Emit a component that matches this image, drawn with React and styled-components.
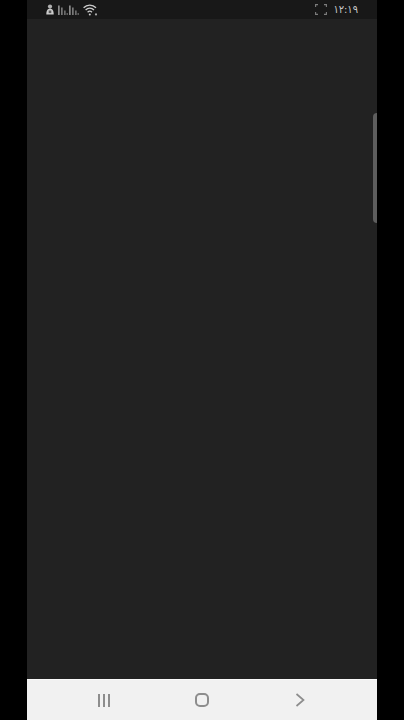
import styled, { createGlobalStyle } from "styled-components";

const GlobalStyle = createGlobalStyle`
  html, body {
    margin: 0;
    padding: 0;
    background: #000;
  }
`;

function SilentIcon() {
  return (
    <svg width="8" height="11" viewBox="0 0 8 11">
      <circle cx="4" cy="2.6" r="2.1" fill="#b0b0b0" />
      <path d="M0.3 10.6 C0.3 6 1.8 4.8 4 4.8 C6.2 4.8 7.7 6 7.7 10.6 Z" fill="#cccccc" />
      <rect x="2.7" y="6.5" width="2.6" height="2.6" fill="#5a5a5a" />
    </svg>
  );
}

function SignalIcon() {
  return (
    <svg width="10" height="10" viewBox="0 0 10 10">
      <rect x="0" y="0.5" width="1.7" height="9.5" fill="#8c8c8c" />
      <rect x="3" y="2.5" width="1.7" height="7.5" fill="#787878" />
      <rect x="6" y="5.5" width="1.7" height="4.5" fill="#6c6c6c" />
      <rect x="8.5" y="8" width="1.5" height="2" fill="#5c5c5c" />
    </svg>
  );
}

function WifiIcon() {
  return (
    <svg width="15" height="12" viewBox="0 0 15 12" fill="none" stroke="#cccccc" strokeWidth="1.3">
      <path d="M0.6 3.8 C4 0.1 9.6 0.1 13 3.8" />
      <path d="M2.6 6 C5 3.6 8.6 3.6 11 6" />
      <path d="M4.6 8.2 C5.8 7 7.8 7 9 8.2" />
      <circle cx="6.8" cy="10.4" r="1" fill="#cccccc" stroke="none" />
      <circle cx="13" cy="10.4" r="1.1" fill="#a8a8a8" stroke="none" />
    </svg>
  );
}

function FullscreenIcon() {
  return (
    <svg width="12" height="11" viewBox="0 0 12 11" fill="none" stroke="#7d7d7d" strokeWidth="1.1">
      <path d="M0.6 3 V0.6 H3" />
      <path d="M9 0.6 H11.4 V3" />
      <path d="M11.4 8 V10.4 H9" />
      <path d="M3 10.4 H0.6 V8" />
    </svg>
  );
}

function App() {
  return (
    <Page>
      <GlobalStyle />
      <Phone>
        <StatusBar>
          <StatusGroup>
            <SilentIcon />
            <Signals>
              <SignalIcon />
              <SignalIcon />
            </Signals>
            <WifiIcon />
          </StatusGroup>
          <StatusGroup>
            <FullscreenIcon />
            <Clock>۱۲:۱۹</Clock>
          </StatusGroup>
        </StatusBar>
        <Content>
          <ScrollThumb />
        </Content>
        <NavBar>
          <RecentsButton>
            <span />
            <span />
            <span />
          </RecentsButton>
          <HomeButton />
          <BackButton>
            <svg width="10" height="14" viewBox="0 0 10 14" fill="none" stroke="#8d8d8d" strokeWidth="1.7">
              <path d="M1.5 1 L8.5 7 L1.5 13" />
            </svg>
          </BackButton>
        </NavBar>
      </Phone>
    </Page>
  );
}

export default App;

const Page = styled.div`
  display: flex;
  justify-content: center;
  height: 720px;
  background: #000;
  overflow: hidden;
`;

const Phone = styled.div`
  display: flex;
  flex-direction: column;
  width: 350px;
  height: 720px;
`;

const StatusBar = styled.div`
  display: flex;
  justify-content: space-between;
  align-items: center;
  flex: none;
  box-sizing: border-box;
  height: 19px;
  padding: 0 19px;
  background: #181818;
`;

const StatusGroup = styled.div`
  display: flex;
  align-items: center;
  gap: 4px;
`;

const Signals = styled.div`
  display: flex;
  gap: 1px;
`;

const Clock = styled.span`
  margin-left: 2px;
  color: #c8c8c8;
  font-family: "DejaVu Sans Condensed", "DejaVu Sans", sans-serif;
  font-size: 11px;
  letter-spacing: -0.8px;
  line-height: 12px;
`;

const Content = styled.div`
  position: relative;
  flex: 1;
  background: #222222;
`;

const ScrollThumb = styled.div`
  position: absolute;
  top: 94px;
  right: 0;
  width: 4px;
  height: 110px;
  border-radius: 4px 0 0 4px;
  background: #5e5e5e;
`;

const NavBar = styled.div`
  display: grid;
  grid-template-columns: repeat(3, 98px);
  justify-content: center;
  align-items: center;
  justify-items: center;
  flex: none;
  box-sizing: border-box;
  height: 41px;
  border-top: 1px solid #fafafa;
  background: #f1f1f1;
`;

const RecentsButton = styled.div`
  display: flex;
  gap: 3px;
  span {
    width: 2px;
    height: 13px;
    background: #8d8d8d;
  }
`;

const HomeButton = styled.div`
  box-sizing: border-box;
  width: 14px;
  height: 14px;
  border: 2px solid #8d8d8d;
  border-radius: 5px;
`;

const BackButton = styled.div`
  display: flex;
`;
